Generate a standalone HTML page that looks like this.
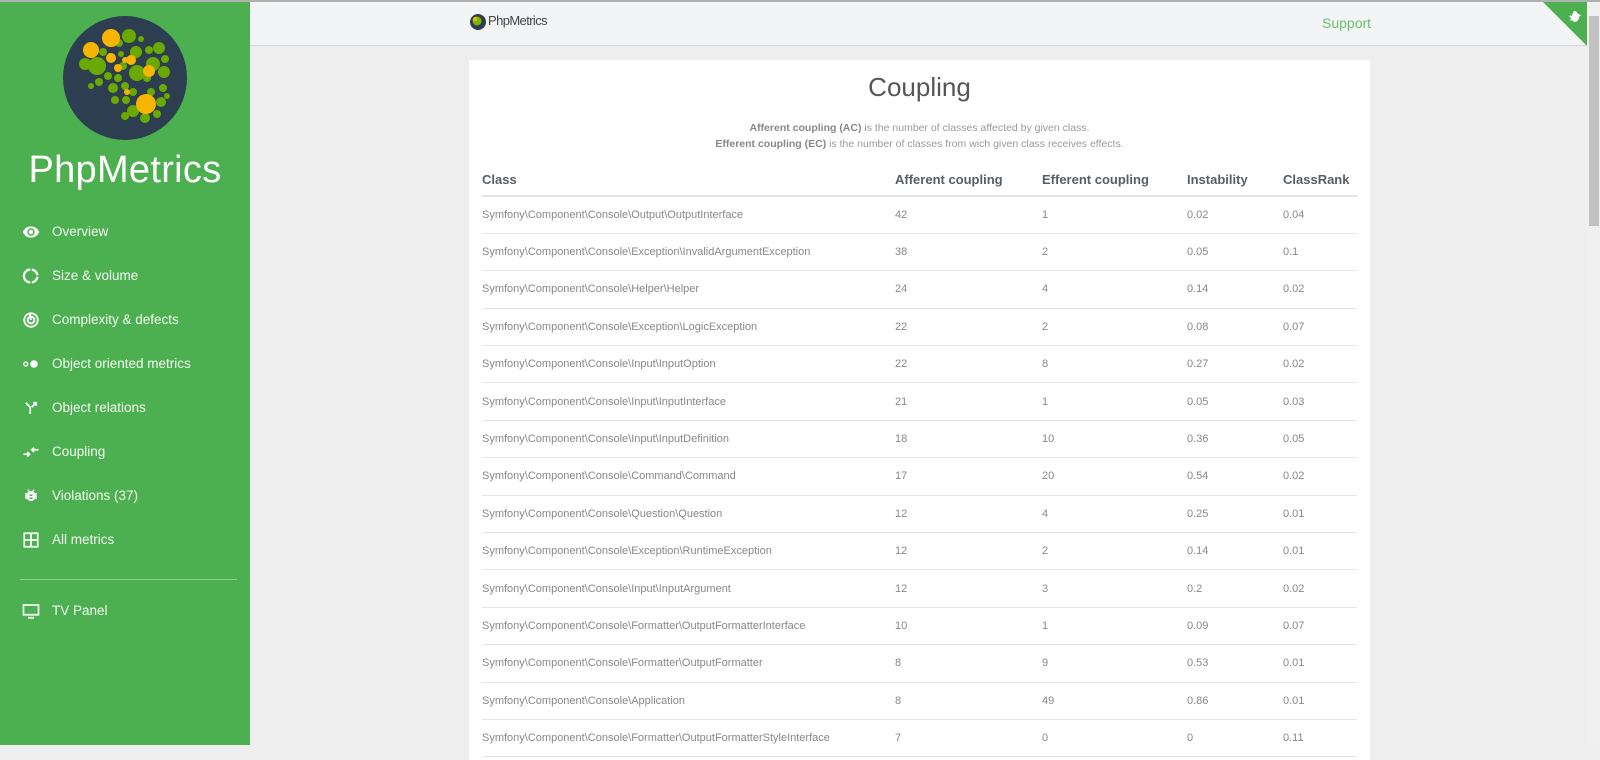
<!DOCTYPE html>
<html><head><meta charset="utf-8"><style>
*{box-sizing:border-box;margin:0;padding:0}
body{width:1600px;height:743px;overflow:hidden;background:#eeeeee;font-family:"Liberation Sans",sans-serif;position:relative;border-top:2px solid #b0b0b0}
#side{position:absolute;left:0;top:0;width:250px;height:743px;background:#4caf50;color:#fff}
#logo{position:absolute;left:63px;top:14px;width:124px;height:124px}
#brand{position:absolute;top:147px;left:0;width:250px;text-align:center;font-size:38px;font-weight:300;letter-spacing:0.3px}
.nav{position:absolute;left:0;height:20px;font-size:13.5px;line-height:20px}
.nav svg{position:absolute;left:22px;top:1px}
.nav span{position:absolute;left:52px;white-space:nowrap;color:#f3fbf3}
#hr{position:absolute;left:20px;top:577px;width:217px;height:1px;background:#8fd08f}
#hdr{position:absolute;left:250px;top:0;width:1337px;height:44px;background:#f3f4f6;border-bottom:1px solid #d9d9d9}
#hdr .b{position:absolute;left:220px;top:11px;font-size:13px;color:#444;letter-spacing:-0.6px}
#hdr .s{position:absolute;left:1072px;top:13px;font-size:14px;color:#6cbf6c}
#scroll{position:absolute;left:1587px;top:0;width:13px;height:743px;background:#f0f0f0}
#thumb{position:absolute;left:1589px;top:14px;width:10px;height:210px;background:#c1c1c1}
#panel{position:absolute;left:469px;top:58px;width:901px;height:700px;background:#fff}
h1{position:absolute;top:12px;width:100%;text-align:center;font-size:26px;font-weight:300;color:#555}
.d{position:absolute;width:100%;text-align:center;font-size:10.5px;color:#9a9a9a}
.d b{color:#888}
table{position:absolute;left:13px;top:103px;width:875px;border-collapse:collapse}
th{text-align:left;font-size:13px;color:#555f66;font-weight:bold;height:33px;border-bottom:2px solid #e5e5e5;padding:0}
td{font-size:11px;color:#888;height:37.4px;border-bottom:1px solid #e5e5e5;padding:0}
</style></head><body>
<div id="side">
<svg id="logo" viewBox="0 0 124 124"><circle cx="62" cy="62" r="62" fill="#2c3e50"/>
<g fill="#6aaa00">
<circle cx="22" cy="48" r="6"/><circle cx="34" cy="50" r="9"/><circle cx="47" cy="40" r="3"/><circle cx="56" cy="27" r="4"/><circle cx="66" cy="20" r="7"/><circle cx="78" cy="23" r="3"/><circle cx="73" cy="36" r="6"/><circle cx="86" cy="34" r="4"/><circle cx="96" cy="32" r="6"/><circle cx="102" cy="43" r="4"/><circle cx="90" cy="48" r="7"/><circle cx="101" cy="56" r="6"/><circle cx="74" cy="57" r="8"/><circle cx="60" cy="50" r="4"/><circle cx="55" cy="62" r="4"/><circle cx="45" cy="60" r="4"/><circle cx="36" cy="66" r="4"/><circle cx="28" cy="70" r="3"/><circle cx="50" cy="72" r="5"/><circle cx="62" cy="70" r="4"/><circle cx="70" cy="76" r="4"/><circle cx="52" cy="84" r="4"/><circle cx="63" cy="84" r="4"/><circle cx="70" cy="95" r="6"/><circle cx="82" cy="102" r="5"/><circle cx="94" cy="98" r="4"/><circle cx="98" cy="86" r="5"/><circle cx="88" cy="76" r="4"/><circle cx="100" cy="72" r="4"/><circle cx="104" cy="80" r="3"/><circle cx="62" cy="100" r="4"/><circle cx="84" cy="62" r="4"/><circle cx="80" cy="90" r="4"/><circle cx="58" cy="38" r="3"/><circle cx="40" cy="36" r="4"/>
</g>
<g fill="#f7b500"><circle cx="28" cy="34" r="8"/><circle cx="48" cy="22" r="9"/><circle cx="48" cy="42" r="5"/><circle cx="62" cy="44" r="3"/><circle cx="68" cy="44" r="5"/><circle cx="86" cy="55" r="6"/><circle cx="83" cy="88" r="10"/><circle cx="55" cy="52" r="4"/><circle cx="64" cy="76" r="3"/></g>
</svg>
<div id="brand">PhpMetrics</div>
<div class="nav" style="top:220px"><svg width="18" height="18" viewBox="0 0 24 24"><path fill="#fff" d="M12 4.5C7 4.5 2.7 7.6 1 12c1.7 4.4 6 7.5 11 7.5s9.3-3.1 11-7.5c-1.7-4.4-6-7.5-11-7.5zm0 12.5a5 5 0 110-10 5 5 0 010 10zm0-8a3 3 0 100 6 3 3 0 000-6z"/></svg><span>Overview</span></div>
<div class="nav" style="top:264px"><svg width="18" height="18" viewBox="0 0 24 24"><path fill="#fff" d="M13 2v3a7 7 0 016 6h3A10 10 0 0013 2zm6 11a7 7 0 01-6 6v3a10 10 0 009-9zm-8 6a7 7 0 010-14V2a10 10 0 000 20z"/></svg><span>Size &amp; volume</span></div>
<div class="nav" style="top:308px"><svg width="18" height="18" viewBox="0 0 24 24"><circle cx="12" cy="12" r="9" fill="none" stroke="#fff" stroke-width="2.5"/><circle cx="12" cy="12" r="4.5" fill="none" stroke="#fff" stroke-width="2.5"/><path d="M12 12L10 2" stroke="#fff" stroke-width="2.5"/></svg><span>Complexity &amp; defects</span></div>
<div class="nav" style="top:352px"><svg width="18" height="18" viewBox="0 0 24 24"><circle cx="5" cy="12" r="2.6" fill="none" stroke="#fff" stroke-width="1.8"/><circle cx="16" cy="12" r="5" fill="#fff"/></svg><span>Object oriented metrics</span></div>
<div class="nav" style="top:396px"><svg width="18" height="18" viewBox="0 0 24 24"><path fill="none" stroke="#fff" stroke-width="2.3" d="M5 5l6 6v9M19 5l-6 6M15 5h4v4"/></svg><span>Object relations</span></div>
<div class="nav" style="top:440px"><svg width="18" height="18" viewBox="0 0 24 24"><path fill="none" stroke="#fff" stroke-width="2.2" d="M2 15h8M7 12l3 3-3 3M22 9h-9M16 6l-3 3 3 3"/></svg><span>Coupling</span></div>
<div class="nav" style="top:484px"><svg width="18" height="18" viewBox="0 0 24 24"><path fill="#fff" d="M20 8h-3a6 6 0 00-2-2l2-2-1-1-2.5 2.5a6 6 0 00-3 0L8 3 7 4l2 2a6 6 0 00-2 2H4v2h2v1H4v2h2v1H4v2h3a6 6 0 0010 0h3v-2h-2v-1h2v-2h-2v-1h2zm-6 8h-4v-2h4zm0-4h-4v-2h4z"/></svg><span>Violations (37)</span></div>
<div class="nav" style="top:528px"><svg width="18" height="18" viewBox="0 0 24 24"><path fill="none" stroke="#fff" stroke-width="2.2" d="M3 3h18v18H3zM12 3v18M3 12h18"/></svg><span>All metrics</span></div>
<div id="hr"></div>
<div class="nav" style="top:599px"><svg width="18" height="18" viewBox="0 0 24 24"><path fill="none" stroke="#fff" stroke-width="2.2" d="M2 4h20v13H2zM8 21h8"/></svg><span>TV Panel</span></div>
</div>
<div id="hdr">
<svg style="position:absolute;left:220px;top:12px" width="16" height="16" viewBox="0 0 16 16"><circle cx="8" cy="8" r="8" fill="#2c3e50"/><circle cx="7" cy="7" r="4.5" fill="#7ab800"/><circle cx="5" cy="5" r="2" fill="#f7b500"/></svg>
<span class="b" style="left:238px">PhpMetrics</span><span class="s">Support</span>
<svg style="position:absolute;right:0;top:0" width="44" height="44" viewBox="0 0 44 44"><path d="M0 0h44v44z" fill="#4caf50"/><path d="M31 9c2 0 3 1 4 3l3 1-2 2c0 3-2 5-5 5l-2-2-2 1 1-3-2-2c1 0 2-1 3 0 0-2 1-3 2-5z" fill="#fff"/></svg>
</div>
<div id="scroll"></div><div id="thumb"></div>
<div id="panel">
<h1>Coupling</h1>
<div class="d" style="top:62px"><b>Afferent coupling (AC)</b> is the number of classes affected by given class.</div>
<div class="d" style="top:78px"><b>Efferent coupling (EC)</b> is the number of classes from wich given class receives effects.</div>
<table>
<colgroup><col style="width:413px"><col style="width:147px"><col style="width:145px"><col style="width:96px"><col></colgroup>
<tr><th>Class</th><th>Afferent coupling</th><th>Efferent coupling</th><th>Instability</th><th>ClassRank</th></tr>
<tr><td>Symfony\Component\Console\Output\OutputInterface</td><td>42</td><td>1</td><td>0.02</td><td>0.04</td></tr>
<tr><td>Symfony\Component\Console\Exception\InvalidArgumentException</td><td>38</td><td>2</td><td>0.05</td><td>0.1</td></tr>
<tr><td>Symfony\Component\Console\Helper\Helper</td><td>24</td><td>4</td><td>0.14</td><td>0.02</td></tr>
<tr><td>Symfony\Component\Console\Exception\LogicException</td><td>22</td><td>2</td><td>0.08</td><td>0.07</td></tr>
<tr><td>Symfony\Component\Console\Input\InputOption</td><td>22</td><td>8</td><td>0.27</td><td>0.02</td></tr>
<tr><td>Symfony\Component\Console\Input\InputInterface</td><td>21</td><td>1</td><td>0.05</td><td>0.03</td></tr>
<tr><td>Symfony\Component\Console\Input\InputDefinition</td><td>18</td><td>10</td><td>0.36</td><td>0.05</td></tr>
<tr><td>Symfony\Component\Console\Command\Command</td><td>17</td><td>20</td><td>0.54</td><td>0.02</td></tr>
<tr><td>Symfony\Component\Console\Question\Question</td><td>12</td><td>4</td><td>0.25</td><td>0.01</td></tr>
<tr><td>Symfony\Component\Console\Exception\RuntimeException</td><td>12</td><td>2</td><td>0.14</td><td>0.01</td></tr>
<tr><td>Symfony\Component\Console\Input\InputArgument</td><td>12</td><td>3</td><td>0.2</td><td>0.02</td></tr>
<tr><td>Symfony\Component\Console\Formatter\OutputFormatterInterface</td><td>10</td><td>1</td><td>0.09</td><td>0.07</td></tr>
<tr><td>Symfony\Component\Console\Formatter\OutputFormatter</td><td>8</td><td>9</td><td>0.53</td><td>0.01</td></tr>
<tr><td>Symfony\Component\Console\Application</td><td>8</td><td>49</td><td>0.86</td><td>0.01</td></tr>
<tr><td>Symfony\Component\Console\Formatter\OutputFormatterStyleInterface</td><td>7</td><td>0</td><td>0</td><td>0.11</td></tr>
</table>
</div>
</body></html>
